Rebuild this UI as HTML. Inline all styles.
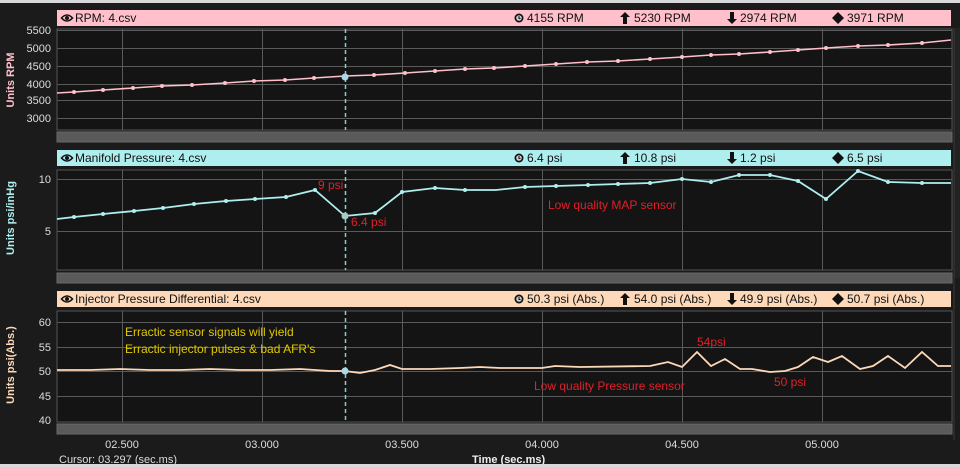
<!DOCTYPE html>
<html><head><meta charset="utf-8"><style>
html,body{margin:0;padding:0;background:#1b1b1b;width:960px;height:467px;overflow:hidden}
svg{display:block}
text{font-family:"Liberation Sans",sans-serif}
</style></head><body>
<svg width="960" height="467" xmlns="http://www.w3.org/2000/svg">
<rect width="960" height="467" fill="#1b1b1b"/>
<rect width="960" height="3" fill="#d8d8d8"/>
<rect x="954" y="28" width="6" height="250" fill="#222"/>
<line x1="954" y1="28" x2="954" y2="440" stroke="#3a3a3a"/>

<!-- Panel 1 -->
<rect x="57" y="10" width="894" height="16" fill="#ffc0cb"/>
<rect x="57" y="29" width="895" height="101" fill="#141414" stroke="#555"/>
<g stroke="#5a5a5a" stroke-width="1">
<line x1="57" y1="30.5" x2="952" y2="30.5"/><line x1="57" y1="48.5" x2="952" y2="48.5"/><line x1="57" y1="66.5" x2="952" y2="66.5"/><line x1="57" y1="84.5" x2="952" y2="84.5"/><line x1="57" y1="100.5" x2="952" y2="100.5"/><line x1="57" y1="118.5" x2="952" y2="118.5"/>
<line x1="122.5" y1="29" x2="122.5" y2="130"/><line x1="262.5" y1="29" x2="262.5" y2="130"/><line x1="402.5" y1="29" x2="402.5" y2="130"/><line x1="542.5" y1="29" x2="542.5" y2="130"/><line x1="682.5" y1="29" x2="682.5" y2="130"/><line x1="822.5" y1="29" x2="822.5" y2="130"/>
</g>
<rect x="57" y="132" width="895" height="10" fill="#5a5a5a" stroke="#6a6a6a"/>
<g fill="#ddd" font-size="11" text-anchor="end">
<text x="51" y="34">5500</text><text x="51" y="52">5000</text><text x="51" y="70">4500</text><text x="51" y="88">4000</text><text x="51" y="104">3500</text><text x="51" y="122">3000</text>
</g>
<text transform="translate(14,80) rotate(-90)" fill="#ffc0cb" font-size="11" font-weight="bold" text-anchor="middle">Units RPM</text>
<polyline fill="none" stroke="#ffc0cb" stroke-width="1.6" points="57,93 74,92 103,90 133,88 162,86 192,85 225,83 254,81 285,80 314,78 345,76 374,75 405,73 435,71 465,69 494,68 525,66 556,64 587,62 618,61 650,59 682,57 711,55 739,54 770,52 798,50 826,48 858,46 888,45 922,43 951,40"/>
<g fill="#ffc0cb"><circle cx="74" cy="92" r="2"/><circle cx="103" cy="90" r="2"/><circle cx="133" cy="88" r="2"/><circle cx="162" cy="86" r="2"/><circle cx="192" cy="85" r="2"/><circle cx="225" cy="83" r="2"/><circle cx="254" cy="81" r="2"/><circle cx="285" cy="80" r="2"/><circle cx="314" cy="78" r="2"/><circle cx="374" cy="75" r="2"/><circle cx="405" cy="73" r="2"/><circle cx="435" cy="71" r="2"/><circle cx="465" cy="69" r="2"/><circle cx="494" cy="68" r="2"/><circle cx="525" cy="66" r="2"/><circle cx="556" cy="64" r="2"/><circle cx="587" cy="62" r="2"/><circle cx="618" cy="61" r="2"/><circle cx="650" cy="59" r="2"/><circle cx="682" cy="57" r="2"/><circle cx="711" cy="55" r="2"/><circle cx="739" cy="54" r="2"/><circle cx="770" cy="52" r="2"/><circle cx="798" cy="50" r="2"/><circle cx="826" cy="48" r="2"/><circle cx="858" cy="46" r="2"/><circle cx="888" cy="45" r="2"/><circle cx="922" cy="43" r="2"/></g>
<line x1="345.5" y1="29" x2="345.5" y2="130" stroke="#8cc" stroke-width="1.5" stroke-dasharray="4,3"/>
<circle cx="345" cy="77" r="3.5" fill="#add8e6"/>

<!-- Panel 2 -->
<rect x="57" y="150" width="894" height="16" fill="#afeeee"/>
<rect x="57" y="170" width="895" height="100" fill="#141414" stroke="#555"/>
<g stroke="#5a5a5a">
<line x1="57" y1="179.5" x2="952" y2="179.5"/><line x1="57" y1="231.5" x2="952" y2="231.5"/>
<line x1="122.5" y1="170" x2="122.5" y2="270"/><line x1="262.5" y1="170" x2="262.5" y2="270"/><line x1="402.5" y1="170" x2="402.5" y2="270"/><line x1="542.5" y1="170" x2="542.5" y2="270"/><line x1="682.5" y1="170" x2="682.5" y2="270"/><line x1="822.5" y1="170" x2="822.5" y2="270"/>
</g>
<rect x="57" y="273" width="895" height="10" fill="#5a5a5a" stroke="#6a6a6a"/>
<g fill="#ddd" font-size="11" text-anchor="end"><text x="51" y="183">10</text><text x="51" y="235">5</text></g>
<text transform="translate(14,218) rotate(-90)" fill="#afeeee" font-size="11" font-weight="bold" text-anchor="middle">Units psi/inHg</text>
<polyline fill="none" stroke="#afeeee" stroke-width="1.8" points="57,219 74,217 103,214 134,211 163,208 194,204 226,201 255,199 286,197 315,190 345,216 375,213 402,192 435,188 465,190 496,190 525,187 556,186 588,185 618,184 650,183 682,179 711,182 739,175 770,175 798,181 826,199 858,171 888,182 922,183 951,183"/>
<g fill="#afeeee"><circle cx="74" cy="217" r="2"/><circle cx="103" cy="214" r="2"/><circle cx="134" cy="211" r="2"/><circle cx="163" cy="208" r="2"/><circle cx="194" cy="204" r="2"/><circle cx="226" cy="201" r="2"/><circle cx="255" cy="199" r="2"/><circle cx="286" cy="197" r="2"/><circle cx="315" cy="190" r="2"/><circle cx="375" cy="213" r="2"/><circle cx="402" cy="192" r="2"/><circle cx="435" cy="188" r="2"/><circle cx="465" cy="190" r="2"/><circle cx="525" cy="187" r="2"/><circle cx="556" cy="186" r="2"/><circle cx="588" cy="185" r="2"/><circle cx="618" cy="184" r="2"/><circle cx="650" cy="183" r="2"/><circle cx="682" cy="179" r="2"/><circle cx="711" cy="182" r="2"/><circle cx="739" cy="175" r="2"/><circle cx="770" cy="175" r="2"/><circle cx="798" cy="181" r="2"/><circle cx="826" cy="199" r="2"/><circle cx="858" cy="171" r="2"/><circle cx="888" cy="182" r="2"/><circle cx="922" cy="183" r="2"/></g>
<line x1="345.5" y1="170" x2="345.5" y2="270" stroke="#8cc" stroke-width="1.5" stroke-dasharray="4,3"/>
<circle cx="345" cy="216" r="3.5" fill="#a8c8c8"/>
<g fill="#e0202a" font-size="12"><text x="318" y="189">9 psi</text><text x="351" y="226">6.4 psi</text><text x="548" y="209">Low quality MAP sensor</text></g>

<!-- Panel 3 -->
<rect x="57" y="291" width="894" height="16" fill="#fdd9b9"/>
<rect x="57" y="311" width="895" height="111" fill="#141414" stroke="#555"/>
<g stroke="#5a5a5a">
<line x1="57" y1="322.5" x2="952" y2="322.5"/><line x1="57" y1="347.5" x2="952" y2="347.5"/><line x1="57" y1="371.5" x2="952" y2="371.5"/><line x1="57" y1="396.5" x2="952" y2="396.5"/>
<line x1="122.5" y1="311" x2="122.5" y2="422"/><line x1="262.5" y1="311" x2="262.5" y2="422"/><line x1="402.5" y1="311" x2="402.5" y2="422"/><line x1="542.5" y1="311" x2="542.5" y2="422"/><line x1="682.5" y1="311" x2="682.5" y2="422"/><line x1="822.5" y1="311" x2="822.5" y2="422"/>
</g>
<rect x="57" y="424" width="895" height="10" fill="#5a5a5a" stroke="#6a6a6a"/>
<g fill="#ddd" font-size="11" text-anchor="end"><text x="51" y="326">60</text><text x="51" y="351">55</text><text x="51" y="375">50</text><text x="51" y="400">45</text><text x="51" y="424">40</text></g>
<text transform="translate(14,365) rotate(-90)" fill="#fdd9b9" font-size="11" font-weight="bold" text-anchor="middle">Units psi(Abs.)</text>
<polyline fill="none" stroke="#fdd9b9" stroke-width="1.8" points="57,370 90,370 120,369 150,370 180,370 210,369 240,370 270,370 300,369 330,371 345,371 360,373 375,370 390,365 402,369 430,369 460,368 480,367 500,368 542,368 555,366 580,367 650,366 668,362 682,367 697,352 711,366 725,359 740,369 752,369 770,372 785,371 798,367 813,357 828,362 842,356 860,369 873,366 888,356 905,368 922,352 938,366 951,366"/>
<line x1="345.5" y1="311" x2="345.5" y2="422" stroke="#8cc" stroke-width="1.5" stroke-dasharray="4,3"/>
<circle cx="345" cy="371" r="3.5" fill="#add8e6"/>
<g fill="#e0c800" font-size="12"><text x="125" y="336">Erractic sensor signals will yield</text><text x="125" y="353">Erractic injector pulses &amp; bad AFR's</text></g>
<g fill="#e0202a" font-size="12"><text x="697" y="346">54psi</text><text x="774" y="386">50 psi</text><text x="534" y="390">Low quality Pressure sensor</text></g>

<!-- x axis -->
<g fill="#ddd" font-size="11" text-anchor="middle"><text x="122" y="448">02.500</text><text x="262" y="448">03.000</text><text x="402" y="448">03.500</text><text x="542" y="448">04.000</text><text x="682" y="448">04.500</text><text x="822" y="448">05.000</text></g>
<text x="59" y="463" fill="#ddd" font-size="11">Cursor: 03.297 (sec.ms)</text>
<text x="472" y="463" fill="#eee" font-size="11" font-weight="bold">Time (sec.ms)</text>
<rect y="464" width="960" height="3" fill="#d8d8d8"/>

<!-- headers -->
<g font-size="12" fill="#111">
<text x="75" y="22">RPM: 4.csv</text>
<text x="75" y="162">Manifold Pressure: 4.csv</text>
<text x="75" y="303">Injector Pressure Differential: 4.csv</text>
<text x="527" y="22">4155 RPM</text><text x="634" y="22">5230 RPM</text><text x="740" y="22">2974 RPM</text><text x="847" y="22">3971 RPM</text>
<text x="527" y="162">6.4 psi</text><text x="634" y="162">10.8 psi</text><text x="740" y="162">1.2 psi</text><text x="847" y="162">6.5 psi</text>
<text x="527" y="303">50.3 psi (Abs.)</text><text x="634" y="303">54.0 psi (Abs.)</text><text x="740" y="303">49.9 psi (Abs.)</text><text x="847" y="303">50.7 psi (Abs.)</text>
</g>
<defs>
<g id="eye"><path d="M-5.5,0 Q0,-6 5.5,0 Q0,6 -5.5,0Z" fill="none" stroke="#111" stroke-width="1.6"/><circle r="2" fill="#111"/></g>
<g id="clk"><circle r="4.5" fill="#111"/><circle r="2.8" fill="#ccc"/><path d="M0,-2V0.5H1.5" stroke="#111" fill="none"/></g>
<g id="up"><path d="M0,-6 L5,-1 H2 V6 H-2 V-1 H-5Z" fill="#111"/></g>
<g id="dn"><path d="M0,6 L5,1 H2 V-6 H-2 V1 H-5Z" fill="#111"/></g>
<g id="dia"><path d="M0,-6 L6,0 L0,6 L-6,0Z" fill="#111"/></g>
</defs>
<use href="#eye" x="67" y="18"/><use href="#eye" x="67" y="158"/><use href="#eye" x="67" y="299"/>
<use href="#clk" x="519" y="18"/><use href="#up" x="625" y="18"/><use href="#dn" x="732" y="18"/><use href="#dia" x="838" y="18"/>
<use href="#clk" x="519" y="158"/><use href="#up" x="625" y="158"/><use href="#dn" x="732" y="158"/><use href="#dia" x="838" y="158"/>
<use href="#clk" x="519" y="299"/><use href="#up" x="625" y="299"/><use href="#dn" x="732" y="299"/><use href="#dia" x="838" y="299"/>
</svg>
</body></html>
